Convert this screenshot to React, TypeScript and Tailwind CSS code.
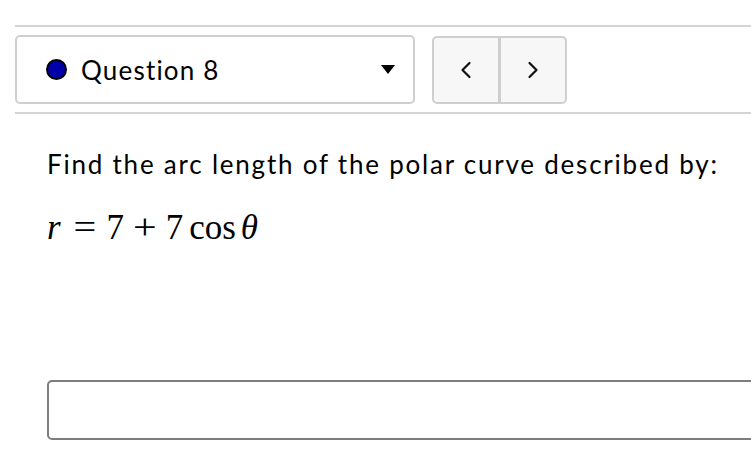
import React, { useState } from "react";

const sans = { fontFamily: '"Lato", "Noto Sans", sans-serif' };
const serif = { fontFamily: '"Liberation Serif", "DejaVu Serif", serif' };

function Chevron({ dir }: { dir: "left" | "right" }) {
  return (
    <svg width="12" height="18" viewBox="0 0 12 18" fill="none">
      <polyline
        points={dir === "left" ? "9.5,2 2.5,9 9.5,16" : "2.5,2 9.5,9 2.5,16"}
        stroke="#111"
        strokeWidth="2.2"
        strokeLinecap="round"
        strokeLinejoin="round"
      />
    </svg>
  );
}

export default function App() {
  const [answer, setAnswer] = useState("");

  return (
    <div className="bg-white w-[751px] h-[461px] overflow-hidden text-black" style={sans}>
      <div className="pt-[25px] pl-[15px]">
        <div className="border-t-2 border-b-2 border-[#d4d4d4] py-[8px] flex items-center">
          <div className="w-[400px] h-[69px] border-2 border-[#cfcfcf] rounded-[5px] flex items-center pl-[29px] pr-[18px]">
            <span className="w-[21px] h-[21px] rounded-full bg-[#0000a8] border-2 border-black shrink-0" />
            <span className="ml-[14px] text-[26px] leading-none tracking-[1.2px]">Question 8</span>
            <span className="ml-auto w-0 h-0 border-l-[7px] border-r-[7px] border-t-[9px] border-l-transparent border-r-transparent border-t-black" />
          </div>
          <div className="ml-[17px] w-[135px] h-[68px] border-2 border-[#cfcfcf] rounded-[5px] bg-[#f7f7f7] flex">
            <button className="flex-1 flex items-center justify-center border-r-[3px] border-[#cfcfcf]">
              <Chevron dir="left" />
            </button>
            <button className="flex-1 flex items-center justify-center">
              <Chevron dir="right" />
            </button>
          </div>
        </div>
      </div>

      <div className="pl-[47px] pt-[33px]">
        <p className="text-[26px] leading-[34px] tracking-[1.78px]">
          Find the arc length of the polar curve described by:
        </p>
        <p className="mt-[27px] text-[35px] leading-[40px] flex items-baseline" style={serif}>
          <span className="italic">r</span>
          <span className="ml-[14px] mr-[12px] inline-block scale-x-115">=</span>
          <span>7</span>
          <span className="mx-[11px] inline-block scale-x-120">+</span>
          <span>7</span>
          <span className="ml-[6px]">cos</span>
          <span className="ml-[5px] italic">θ</span>
        </p>
      </div>

      <div className="pl-[47px] mt-[132px]">
        <input
          value={answer}
          onChange={(e) => setAnswer(e.target.value)}
          className="w-[720px] h-[60px] border-2 border-[#7d7d7d] rounded-[5px] px-3 text-[24px] outline-none"
        />
      </div>
    </div>
  );
}
